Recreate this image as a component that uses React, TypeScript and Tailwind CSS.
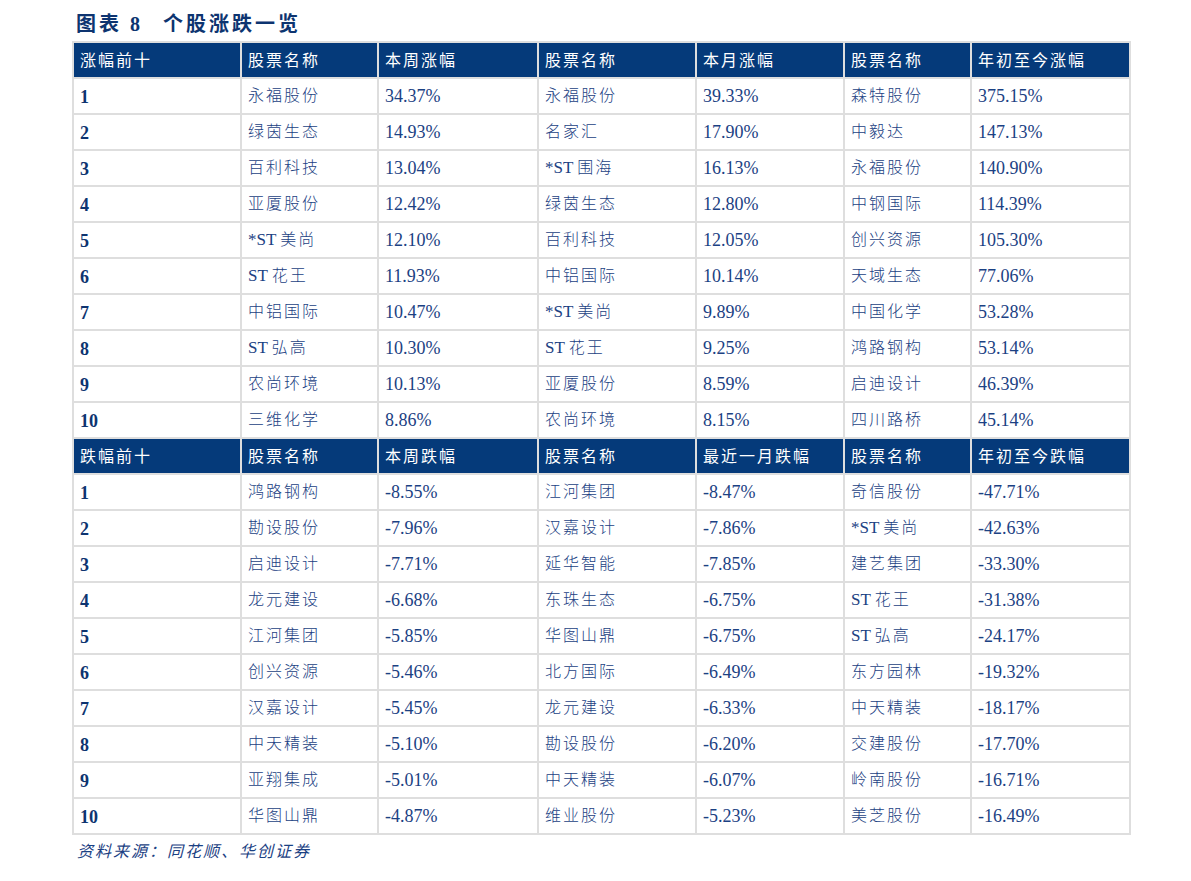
const widths = ['w-[168px]', 'w-[137px]', 'w-[160px]', 'w-[158px]', 'w-[148px]', 'w-[127px]', 'w-[159px]']

const upHeader = ['涨幅前十', '股票名称', '本周涨幅', '股票名称', '本月涨幅', '股票名称', '年初至今涨幅']
const up = [
  ['永福股份', '34.37%', '永福股份', '39.33%', '森特股份', '375.15%'],
  ['绿茵生态', '14.93%', '名家汇', '17.90%', '中毅达', '147.13%'],
  ['百利科技', '13.04%', '*ST 围海', '16.13%', '永福股份', '140.90%'],
  ['亚厦股份', '12.42%', '绿茵生态', '12.80%', '中钢国际', '114.39%'],
  ['*ST 美尚', '12.10%', '百利科技', '12.05%', '创兴资源', '105.30%'],
  ['ST 花王', '11.93%', '中铝国际', '10.14%', '天域生态', '77.06%'],
  ['中铝国际', '10.47%', '*ST 美尚', '9.89%', '中国化学', '53.28%'],
  ['ST 弘高', '10.30%', 'ST 花王', '9.25%', '鸿路钢构', '53.14%'],
  ['农尚环境', '10.13%', '亚厦股份', '8.59%', '启迪设计', '46.39%'],
  ['三维化学', '8.86%', '农尚环境', '8.15%', '四川路桥', '45.14%'],
]

const downHeader = ['跌幅前十', '股票名称', '本周跌幅', '股票名称', '最近一月跌幅', '股票名称', '年初至今跌幅']
const down = [
  ['鸿路钢构', '-8.55%', '江河集团', '-8.47%', '奇信股份', '-47.71%'],
  ['勘设股份', '-7.96%', '汉嘉设计', '-7.86%', '*ST 美尚', '-42.63%'],
  ['启迪设计', '-7.71%', '延华智能', '-7.85%', '建艺集团', '-33.30%'],
  ['龙元建设', '-6.68%', '东珠生态', '-6.75%', 'ST 花王', '-31.38%'],
  ['江河集团', '-5.85%', '华图山鼎', '-6.75%', 'ST 弘高', '-24.17%'],
  ['创兴资源', '-5.46%', '北方国际', '-6.49%', '东方园林', '-19.32%'],
  ['汉嘉设计', '-5.45%', '龙元建设', '-6.33%', '中天精装', '-18.17%'],
  ['中天精装', '-5.10%', '勘设股份', '-6.20%', '交建股份', '-17.70%'],
  ['亚翔集成', '-5.01%', '中天精装', '-6.07%', '岭南股份', '-16.71%'],
  ['华图山鼎', '-4.87%', '维业股份', '-5.23%', '美芝股份', '-16.49%'],
]

// "*ST 美尚" -> latin prefix without tracking, CJK part with tracking
function Name({ text }: { text: string }) {
  const parts = text.split(' ')
  if (parts.length === 1) return <span className="tracking-[2px]">{text}</span>
  return (
    <>
      <span className="text-[17px] tracking-normal">{parts[0]} </span>
      <span className="tracking-[2px]">{parts[1]}</span>
    </>
  )
}

function HeaderRow({ cells }: { cells: string[] }) {
  return (
    <tr className="h-[36px]">
      {cells.map((c, i) => (
        <td
          key={i}
          className="border-2 border-[#dedede] bg-[#053a7a] px-[6px] pb-[2px] font-['Noto_Sans_CJK_SC',sans-serif] text-[16px] tracking-[2px] text-white"
        >
          {c}
        </td>
      ))}
    </tr>
  )
}

function DataRows({ rows }: { rows: string[][] }) {
  return (
    <>
      {rows.map((r, idx) => (
        <tr key={idx} className="h-[36px]">
          <td className="border-2 border-[#dedede] px-[6px] pt-[3px] font-['Liberation_Serif',serif] text-[18px] font-bold text-[#0d3470]">
            {idx + 1}
          </td>
          {r.map((c, i) =>
            i % 2 === 0 ? (
              <td
                key={i}
                className="border-2 border-[#dedede] px-[6px] font-['Liberation_Serif','Noto_Sans_CJK_SC',serif] text-[16px] font-light text-[#1b4183]"
              >
                <Name text={c} />
              </td>
            ) : (
              <td
                key={i}
                className="border-2 border-[#dedede] px-[6px] pt-[1px] font-['Liberation_Serif',serif] text-[18px] text-[#1b4183]"
              >
                {c}
              </td>
            )
          )}
        </tr>
      ))}
    </>
  )
}

export default function App() {
  return (
    <div className="h-[881px] w-[1191px] bg-white pl-[72px] pt-[11px]">
      <h1 className="pl-[4px] font-['Liberation_Serif','Noto_Sans_CJK_SC',serif] text-[20px] font-bold leading-[26px] tracking-[3px] text-[#0d3470]">
        图表 8<span className="ml-[20px]">个股涨跌一览</span>
      </h1>
      <table className="mt-[4px] w-[1057px] table-fixed border-collapse border-2 border-[#dedede]">
        <colgroup>
          {widths.map((w, i) => (
            <col key={i} className={w} />
          ))}
        </colgroup>
        <tbody>
          <HeaderRow cells={upHeader} />
          <DataRows rows={up} />
          <HeaderRow cells={downHeader} />
          <DataRows rows={down} />
        </tbody>
      </table>
      <p className="mt-[5px] pl-[5px] font-['Liberation_Serif','Noto_Sans_CJK_SC',serif] text-[16px] italic tracking-[2px] text-[#1b4183]">
        资料来源：同花顺、华创证券
      </p>
    </div>
  )
}
